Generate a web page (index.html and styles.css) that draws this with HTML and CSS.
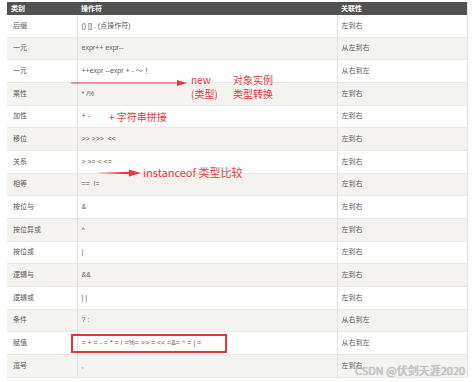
FILE: index.html
```html
<!DOCTYPE html>
<html>
<head>
<meta charset="utf-8">
<link rel="stylesheet" href="styles.css">
</head>
<body>
<div class="wrap">
<table class="ops">
<thead>
<tr><th class="c1">类别</th><th class="c2">操作符</th><th class="c3">关联性</th></tr>
</thead>
<tbody>
<tr><td>后缀</td><td>() [] . (点操作符)</td><td>左到右</td></tr>
<tr><td>一元</td><td>expr++ expr--</td><td>从左到右</td></tr>
<tr><td>一元</td><td>++expr --expr + - ～ ！</td><td>从右到左</td></tr>
<tr><td>乘性</td><td>* /%</td><td>左到右</td></tr>
<tr><td>加性</td><td>+ -</td><td>左到右</td></tr>
<tr><td>移位</td><td>&gt;&gt; &gt;&gt;&gt; &nbsp;&lt;&lt;</td><td>左到右</td></tr>
<tr><td>关系</td><td>&gt; &gt;= &lt; &lt;=</td><td>左到右</td></tr>
<tr><td>相等</td><td>== &nbsp;!=</td><td>左到右</td></tr>
<tr><td>按位与</td><td>&amp;</td><td>左到右</td></tr>
<tr><td>按位异或</td><td>^</td><td>左到右</td></tr>
<tr><td>按位或</td><td>|</td><td>左到右</td></tr>
<tr><td>逻辑与</td><td>&amp;&amp;</td><td>左到右</td></tr>
<tr><td>逻辑或</td><td>| |</td><td>左到右</td></tr>
<tr><td>条件</td><td>? :</td><td>从右到左</td></tr>
<tr><td>赋值</td><td>= + = - = * = / =%= &gt;&gt; = &lt;&lt; =&amp;= ^ = | =</td><td>从右到左</td></tr>
<tr><td>逗号</td><td>,</td><td>左到右</td></tr>
</tbody>
</table>

<svg class="arrow a1" width="120" height="8" viewBox="0 0 120 8">
  <line x1="0" y1="4" x2="108" y2="4" stroke="#e8393d" stroke-width="1.2"/>
  <polygon points="106,1 116,4 106,7" fill="#e8393d"/>
</svg>
<div class="note n-new">new<br>(类型)</div>
<div class="note n-obj">对象实例<br>类型转换</div>
<div class="note n-str">+ 字符串拼接</div>
<svg class="arrow a2" width="50" height="8" viewBox="0 0 50 8">
  <polygon points="0,4 36,2.8 36,5.2" fill="#e8393d"/>
  <polygon points="34,0.5 46,4 34,7.5" fill="#e8393d"/>
</svg>
<div class="note n-inst">instanceof 类型比较</div>
<div class="redbox"></div>
<div class="mark">CSDN @伏剑天涯2020</div>
</div>
</body>
</html>
```

FILE: styles.css
```css
html, body {
  margin: 0;
  padding: 0;
  background: #ffffff;
}
body {
  font-family: "Liberation Sans", "Noto Sans CJK SC", sans-serif;
  color: #5a5a5a;
}
.wrap {
  position: relative;
  width: 474px;
  height: 382px;
  overflow: hidden;
  padding: 2px 0 0 7px;
  box-sizing: border-box;
}
.ops {
  border-collapse: collapse;
  width: 461px;
  table-layout: fixed;
  font-size: 7px;
  border-right: 1px solid #e2e2e2;
}
.ops th {
  background: #525252;
  color: #ffffff;
  font-weight: bold;
  text-align: left;
  height: 13px;
  padding: 0 4px;
  line-height: 13px;
}
.ops th.c1 { width: 62px; }
.ops th.c2 { width: 252px; }
.ops th.c3 { width: 122px; }
.ops td {
  height: 21.67px;
  padding: 0 4px;
  line-height: 10px;
  border-bottom: 1px solid #e8e8e6;
  border-left: 1px solid #e2e2e2;
  white-space: nowrap;
  color: #5a5a5a;
}
.ops td:first-child {
  border-left: none;
  padding-left: 6px;
}
.ops tbody tr:nth-child(even) td {
  background: #f4f3ef;
}
.arrow {
  position: absolute;
}
.a1 { left: 71px; top: 79px; }
.a2 { left: 95px; top: 169px; }
.note {
  position: absolute;
  color: #e8393d;
  font-family: "Noto Sans CJK SC", sans-serif;
  font-size: 10px;
  line-height: 13.5px;
  white-space: nowrap;
}
.n-new { left: 191px; top: 73px; }
.n-obj { left: 233px; top: 73px; }
.n-str { left: 109px; top: 110px; }
.n-inst { left: 143px; top: 165px; font-size: 11px; line-height: 15px; }
.redbox {
  position: absolute;
  left: 71px;
  top: 334px;
  width: 152px;
  height: 15px;
  border: 2px solid #e0363b;
}
.mark {
  position: absolute;
  left: 355px;
  top: 363px;
  font-family: "Noto Sans CJK SC", sans-serif;
  font-size: 11px;
  line-height: 14px;
  color: #c8c8c8;
  text-shadow: 0 0 1px #9a9a9a;
  white-space: nowrap;
}
```
